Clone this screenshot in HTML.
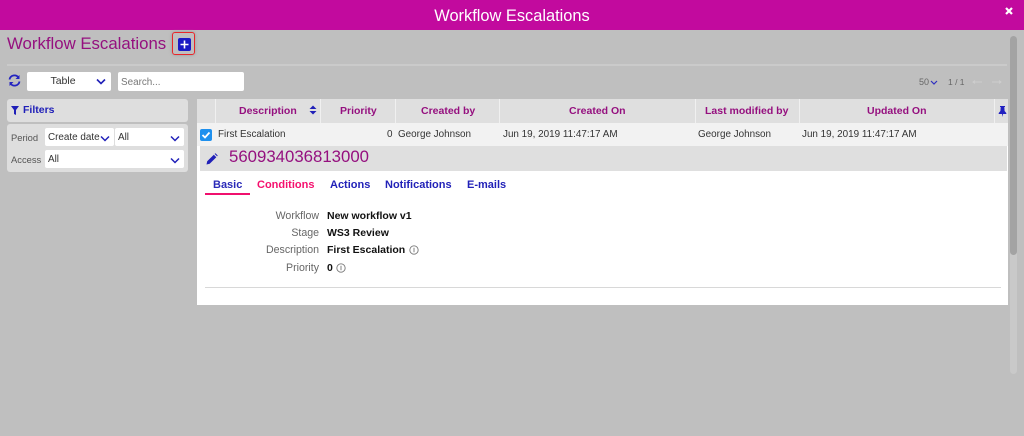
<!DOCTYPE html>
<html><head><meta charset="utf-8"><style>
html,body{margin:0;padding:0;width:1024px;height:436px;overflow:hidden;background:#bfbfbf;font-family:"Liberation Sans",sans-serif}
.a{position:absolute;white-space:nowrap}
.h{font-size:10.5px;font-weight:bold;color:#95107f;top:104px;line-height:14px}
.t{font-size:9.9px;color:#333;top:128px;line-height:14px}
.tab{font-size:11px;font-weight:bold;color:#2222b8;top:178px;line-height:14px}
.l{font-size:10.6px;color:#666;right:705px;line-height:13px}
.v{font-size:10.5px;font-weight:bold;color:#111;left:327px;line-height:13px}
.box{background:#fff;border-radius:2px;font-size:9.9px;color:#333;line-height:19px;height:18px}
.sep{top:99px;width:1px;height:24px;background:#f0f0f0}
</style></head><body>
<div class="a" style="left:0;top:0;width:1024px;height:30px;background:#c20a9e"></div>
<div class="a" style="left:0;top:6px;width:1024px;text-align:center;color:#fff;font-size:16.4px;line-height:20px">Workflow Escalations</div>
<svg class="a" style="left:1005px;top:7px" width="8" height="8" viewBox="0 0 8 8"><path d="M1 1L7 7M7 1L1 7" stroke="#fff" stroke-width="2.2"/></svg>

<div class="a" style="left:7px;top:34px;font-size:16.8px;line-height:20px;color:#95107f">Workflow Escalations</div>
<div class="a" style="left:172px;top:32px;width:23px;height:23px;border:1px solid #e8262a;border-radius:3px;box-sizing:border-box;box-shadow:0 0 3px #999"></div>
<div class="a" style="left:178px;top:38px;width:13px;height:13px;background:#1a1ac4;border-radius:2px"></div>
<svg class="a" style="left:178px;top:38px" width="13" height="13" viewBox="0 0 13 13"><path d="M6.5 2.5V10.5M2.5 6.5H10.5" stroke="#fff" stroke-width="1.6"/></svg>
<div class="a" style="left:7px;top:64px;width:1000px;height:2px;background:#cacaca"></div>

<svg class="a" style="left:8px;top:74px" width="13" height="13" viewBox="0 0 13 13" fill="none" stroke="#2424c0" stroke-width="1.8"><path d="M1.5 5.5A5 5 0 0 1 10.5 3.5"/><path d="M11.5 7.5A5 5 0 0 1 2.5 9.5"/><path d="M11.5 1V5H7.5Z" fill="#2424c0" stroke="none"/><path d="M1.5 12V8H5.5Z" fill="#2424c0" stroke="none"/></svg>
<div class="a box" style="left:27px;top:72px;width:84px;height:19px;line-height:18px;text-align:center;text-indent:-12px;font-size:10.5px">Table</div>
<svg class="a" style="left:96px;top:78px" width="10" height="7" viewBox="0 0 10 7"><path d="M1 1.5L5 5.5L9 1.5" fill="none" stroke="#2020b8" stroke-width="1.6"/></svg>
<div class="a box" style="left:118px;top:72px;width:126px;height:19px;line-height:21px;text-indent:3px;color:#777">Search...</div>

<div class="a" style="left:919px;top:76px;font-size:9px;line-height:12px;color:#666">50</div>
<svg class="a" style="left:930px;top:80px" width="8" height="5" viewBox="0 0 8 5"><path d="M1 1L4 4L7 1" fill="none" stroke="#3030c0" stroke-width="1.2"/></svg>
<div class="a" style="left:948px;top:76px;font-size:8.5px;line-height:12px;color:#666">1 / 1</div>
<svg class="a" style="left:972px;top:79px" width="30" height="6" viewBox="0 0 30 6" fill="none" stroke="#cdcdcd"><path d="M10 3H1M3 1.5L1 3L3 4.5M20 3H29M27 1.5L29 3L27 4.5"/></svg>

<div class="a" style="left:7px;top:99px;width:181px;height:23px;background:#dedede;border-radius:3px"></div>
<svg class="a" style="left:11px;top:106px" width="9" height="9" viewBox="0 0 9 9"><path d="M0 0H8L5 4V9L3 8V4Z" fill="#2020b8"/></svg>
<div class="a" style="left:23px;top:104px;font-size:10.5px;font-weight:bold;color:#2020b8;line-height:13px">Filters</div>
<div class="a" style="left:7px;top:124px;width:181px;height:48px;background:#dedede;border-radius:3px"></div>
<div class="a" style="left:11px;top:131px;font-size:9.4px;color:#555;line-height:13px">Period</div>
<div class="a" style="left:11px;top:153px;font-size:9.4px;color:#555;line-height:13px">Access</div>
<div class="a box" style="left:45px;top:128px;width:69px;text-indent:3px">Create date</div>
<div class="a box" style="left:115px;top:128px;width:69px;text-indent:3px">All</div>
<div class="a box" style="left:45px;top:150px;width:139px;text-indent:3px">All</div>
<svg class="a" style="left:100px;top:135px" width="10" height="7" viewBox="0 0 10 7"><path d="M1 1.5L5 5.5L9 1.5" fill="none" stroke="#2020b8" stroke-width="1.5"/></svg>
<svg class="a" style="left:170px;top:135px" width="10" height="7" viewBox="0 0 10 7"><path d="M1 1.5L5 5.5L9 1.5" fill="none" stroke="#2020b8" stroke-width="1.5"/></svg>
<svg class="a" style="left:170px;top:157px" width="10" height="7" viewBox="0 0 10 7"><path d="M1 1.5L5 5.5L9 1.5" fill="none" stroke="#2020b8" stroke-width="1.5"/></svg>

<div class="a" style="left:197px;top:99px;width:811px;height:206px;background:#fff"></div>
<div class="a" style="left:197px;top:99px;width:811px;height:24px;background:#dfdfdf"></div>
<div class="a" style="left:197px;top:123px;width:811px;height:23px;background:#f2f2f2"></div>
<div class="a sep" style="left:215px"></div><div class="a sep" style="left:320px"></div><div class="a sep" style="left:395px"></div><div class="a sep" style="left:499px"></div><div class="a sep" style="left:695px"></div><div class="a sep" style="left:799px"></div><div class="a sep" style="left:994px"></div>
<div class="a h" style="left:239px">Description</div>
<svg class="a" style="left:309px;top:105px" width="8" height="10" viewBox="0 0 8 10"><path d="M4 0.5L7.5 4H0.5ZM0.5 6H7.5L4 9.5Z" fill="#2020b8"/></svg>
<div class="a h" style="left:340px">Priority</div>
<div class="a h" style="left:421px">Created by</div>
<div class="a h" style="left:569px">Created On</div>
<div class="a h" style="left:705px">Last modified by</div>
<div class="a h" style="left:867px">Updated On</div>
<svg class="a" style="left:998px;top:106px" width="9" height="11" viewBox="0 0 9 11"><path d="M2 0H7V1H6.3L6.6 5L8.3 7V8H5L4.5 11L4 8H0.7V7L2.4 5L2.7 1H2Z" fill="#2020c0"/></svg>

<div class="a" style="left:200px;top:129px;width:12px;height:12px;background:#1e90ee;border-radius:2px"></div>
<svg class="a" style="left:200px;top:129px" width="12" height="12" viewBox="0 0 12 12"><path d="M2.5 6L5 8.5L9.5 3.5" fill="none" stroke="#fff" stroke-width="1.8"/></svg>
<div class="a t" style="left:218px">First Escalation</div>
<div class="a t" style="left:387px">0</div>
<div class="a t" style="left:398px">George Johnson</div>
<div class="a t" style="left:503px">Jun 19, 2019 11:47:17 AM</div>
<div class="a t" style="left:698px">George Johnson</div>
<div class="a t" style="left:802px">Jun 19, 2019 11:47:17 AM</div>

<div class="a" style="left:200px;top:146px;width:807px;height:25px;background:#dfdfdf"></div>
<svg class="a" style="left:206px;top:153px" width="12" height="12" viewBox="0 0 12 12"><path d="M0.5 11.5L1.2 8.3L7.8 1.7L10.3 4.2L3.7 10.8Z M8.6 0.9L9.5 0.3L11.7 2.5L11.1 3.4Z" fill="#2020b8"/></svg>
<div class="a" style="left:229px;top:147px;font-size:16.8px;line-height:20px;color:#95107f">560934036813000</div>

<div class="a tab" style="left:213px;color:#2a2ab8">Basic</div>
<div class="a tab" style="left:257px;color:#f5106e">Conditions</div>
<div class="a tab" style="left:330px">Actions</div>
<div class="a tab" style="left:385px">Notifications</div>
<div class="a tab" style="left:467px">E-mails</div>
<div class="a" style="left:205px;top:193px;width:45px;height:2px;background:#f0106e"></div>

<div class="a l" style="top:210px">Workflow</div><div class="a v" style="top:210px">New workflow v1</div>
<div class="a l" style="top:227px">Stage</div><div class="a v" style="top:227px">WS3 Review</div>
<div class="a l" style="top:244px">Description</div><div class="a v" style="top:244px">First Escalation</div>
<div class="a l" style="top:262px">Priority</div><div class="a v" style="top:262px">0</div>
<svg class="a" style="left:409px;top:245px" width="10" height="10" viewBox="0 0 11 11"><circle cx="5.5" cy="5.5" r="4.6" fill="none" stroke="#777"/><path d="M5.5 3V8" stroke="#777"/></svg>
<svg class="a" style="left:336px;top:263px" width="10" height="10" viewBox="0 0 11 11"><circle cx="5.5" cy="5.5" r="4.6" fill="none" stroke="#777"/><path d="M5.5 3V8" stroke="#777"/></svg>
<div class="a" style="left:205px;top:287px;width:796px;height:1px;background:#d8d8d8"></div>

<div class="a" style="left:1010px;top:36px;width:7px;height:338px;background:#c9c9c9;border-radius:4px"></div>
<div class="a" style="left:1010px;top:36px;width:7px;height:219px;background:#a3a3a3;border-radius:4px"></div>
</body></html>
